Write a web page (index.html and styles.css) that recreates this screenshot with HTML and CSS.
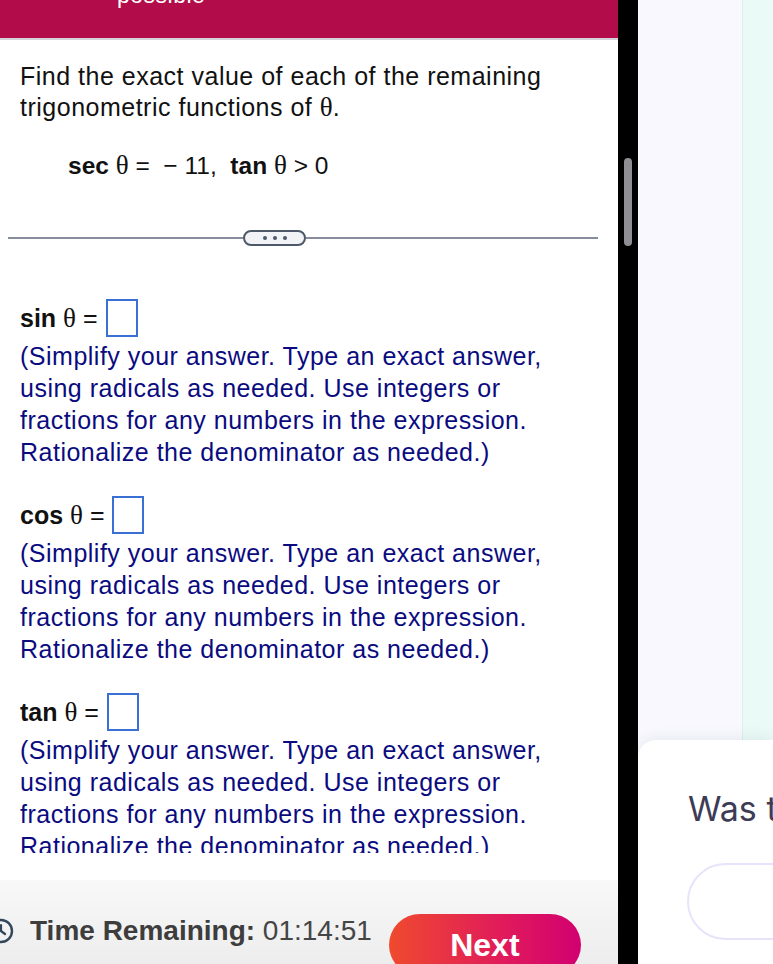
FILE: index.html
```html
<!DOCTYPE html>
<html>
<head>
<meta charset="utf-8">
<link rel="stylesheet" href="styles.css">
</head>
<body>
<div class="page">
  <div class="main">
    <div class="header"><span class="header-text">possible</span></div>
    <div class="scroll">
      <p class="question">Find the exact value of each of the remaining trigonometric functions of <span class="th">θ</span>.</p>
      <p class="given"><b>sec</b> <span class="th">θ</span> = &nbsp;− 11, &nbsp;<b>tan</b> <span class="th">θ</span> &gt; 0</p>
      <div class="divider"><span class="line"></span><span class="more"><i></i><i></i><i></i></span><span class="line"></span></div>

      <div class="part first">
        <div class="row"><b>sin</b>&nbsp;<span class="th">θ</span>&nbsp;=&nbsp;<span class="box"></span></div>
        <p class="hint">(Simplify your answer. Type an exact answer, using radicals as needed. Use integers or fractions for any numbers in the expression. Rationalize the denominator as needed.)</p>
      </div>
      <div class="part">
        <div class="row"><b>cos</b>&nbsp;<span class="th">θ</span>&nbsp;=&nbsp;<span class="box"></span></div>
        <p class="hint">(Simplify your answer. Type an exact answer, using radicals as needed. Use integers or fractions for any numbers in the expression. Rationalize the denominator as needed.)</p>
      </div>
      <div class="part">
        <div class="row"><b>tan</b>&nbsp;<span class="th">θ</span>&nbsp;=&nbsp;<span class="box"></span></div>
        <p class="hint">(Simplify your answer. Type an exact answer, using radicals as needed. Use integers or fractions for any numbers in the expression. Rationalize the denominator as needed.)</p>
      </div>
    </div>
    <div class="footer">
      <div class="bar">
        <svg class="clock" width="26" height="26" viewBox="0 0 26 26"><circle cx="13" cy="13" r="11" fill="none" stroke="#34465a" stroke-width="2.4"/><path d="M13 7v6l4 3" fill="none" stroke="#34465a" stroke-width="2.2" stroke-linecap="round"/></svg>
        <span class="time"><b>Time Remaining:</b> 01:14:51</span>
        <span class="next">Next</span>
      </div>
    </div>
  </div>
  <div class="strip"><span class="thumb"></span></div>
  <div class="side">
    <div class="card">
      <div class="was">Was this helpful?</div>
      <div class="pill"></div>
    </div>
  </div>
</div>
</body>
</html>
```

FILE: styles.css
```css
html, body { margin: 0; padding: 0; }
body { width: 773px; height: 964px; overflow: hidden; font-family: "Liberation Sans", Arial, sans-serif; }
.page { display: flex; height: 964px; }
.main { width: 618px; flex: none; display: flex; flex-direction: column; background: #fff; overflow: hidden; }
.header { height: 38px; background: #b20c4a; border-bottom: 2px solid #d4d4da; flex: none; padding-left: 117px; box-sizing: content-box; }
.header-text { display: block; color: #fff; font-size: 23px; line-height: 23px; margin-top: -16px; letter-spacing: 0.5px; }
.scroll { height: 813px; flex: none; overflow: hidden; padding: 0 20px; box-sizing: border-box; }
.question { margin: 21px 0 0; font-size: 25px; letter-spacing: 0.5px; line-height: 31px; color: #111; }
.th { font-family: "Liberation Serif", "Times New Roman", serif; font-size: 27px; letter-spacing: 0; }
.given { margin: 27px 0 0; padding-left: 48px; font-size: 24.5px; line-height: 31px; color: #111; }
.divider { margin: 49px 0 0 -12px; width: 590px; height: 16px; display: flex; align-items: center; }
.line { flex: none; width: 235px; height: 2px; background: #868c9b; }
.divider .line:last-child { flex: 1; }
.more { flex: none; width: 59px; height: 12px; border: 2px solid #4d5868; border-radius: 8px; background: #f1f3f6; display: flex; align-items: center; justify-content: center; gap: 6px; }
.more i { width: 4px; height: 4px; border-radius: 50%; background: #4d5868; }
.part { margin-top: 28px; }
.part.first { margin-top: 53px; }
.row { height: 38px; display: flex; align-items: center; font-size: 25px; color: #111; }
.box { width: 28px; height: 34px; border: 2px solid #3a6fd4; margin-left: 1px; }
.hint { margin: 3px 0 0; font-size: 25px; letter-spacing: 0.5px; line-height: 32px; color: #0b0b80; }
.footer { flex: 1; background: #fff; padding-top: 27px; overflow: hidden; }
.bar { height: 84px; background: linear-gradient(#f8f8f8, #ededed); display: flex; align-items: flex-start; padding-top: 34px; box-sizing: border-box; }
.clock { margin-left: -12px; margin-top: 4px; flex: none; }
.time { margin-left: 16px; font-size: 28px; line-height: 34px; color: #454545; white-space: nowrap; }
.time b { color: #3d3d3d; }
.next { margin-left: 17px; width: 192px; height: 62px; border-radius: 31px; background: linear-gradient(90deg, #ef4a2e, #e01a5c 60%, #d20070); color: #fff; font-weight: bold; font-size: 32px; display: flex; align-items: center; justify-content: center; flex: none; }
.strip { width: 20px; flex: none; background: #000; display: flex; justify-content: center; padding-top: 158px; box-sizing: border-box; }
.thumb { width: 8px; height: 88px; border-radius: 4px; background: #8e8e94; }
.side { flex: 1; background: linear-gradient(90deg, #f8f8fe 104px, #d6f2e8 104px, #d6f2e8 105px, #eafaf6 105px); overflow: hidden; }
.card { margin-top: 740px; height: 224px; background: #fff; border-radius: 18px 0 0 0; box-shadow: 0 -3px 14px rgba(40,40,90,0.07); padding: 47px 0 0 50px; box-sizing: border-box; }
.was { font-family: Inter, "Noto Sans", sans-serif; font-size: 34px; line-height: 44px; color: #3d3b55; white-space: nowrap; }
.pill { margin-top: 32px; height: 73px; width: 200px; border: 2px solid #e6e4fa; border-radius: 40px; margin-left: -1px; }
```
